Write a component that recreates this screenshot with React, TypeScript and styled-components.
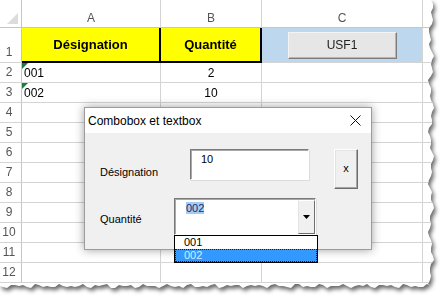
import React from "react";
import styled, { createGlobalStyle } from "styled-components";

const GlobalStyle = createGlobalStyle`
  html, body {
    margin: 0;
    padding: 0;
    background: #ffffff;
    overflow: hidden;
  }
`;

// jagged "torn paper" outline for the right and bottom edges
const tornOutline = (() => {
  const w = 431;
  const h = 286;
  const pts: string[] = ["0px 0px"];
  for (let y = 0; y <= h; y += 4) {
    const jitter = Math.round(Math.sin(y * 1.7) * 1.6 + Math.sin(y * 0.37) * 1.4);
    pts.push(`${w + jitter}px ${y}px`);
  }
  for (let x = w; x >= 0; x -= 4) {
    const jitter = Math.round(Math.sin(x * 2.1) * 1.3 + Math.sin(x * 0.29) * 1.2);
    pts.push(`${x}px ${h + jitter}px`);
  }
  pts.push("0px 286px");
  return `polygon(${pts.join(", ")})`;
})();

const Page = styled.div`
  position: relative;
  width: 443px;
  height: 297px;
  background: #ffffff;
  overflow: hidden;
`;

const Paper = styled.div`
  filter: drop-shadow(2px 3px 2px rgba(0, 0, 0, 0.6));
`;

const Sheet = styled.div`
  width: 436px;
  height: 290px;
  background: #ffffff;
  clip-path: ${tornOutline};
  display: grid;
  grid-template-columns: 22px 139px 101px 161px 1fr;
  grid-template-rows: 28px 35px repeat(11, 20px) 1fr;
  font-family: "Liberation Sans", Arial, sans-serif;
  font-size: 12px;
  color: #000;
`;

const Corner = styled.div`
  position: relative;
  border-right: 1px solid #c6c6c6;
  border-bottom: 1px solid #c6c6c6;

  &::after {
    content: "";
    position: absolute;
    right: 3px;
    bottom: 3px;
    width: 0;
    height: 0;
    border-left: 11px solid transparent;
    border-bottom: 11px solid #dcdcdc;
  }
`;

const ColHead = styled.div`
  display: flex;
  align-items: flex-end;
  justify-content: center;
  padding-bottom: 2px;
  box-sizing: border-box;
  border-right: 1px solid #d4d4d4;
  border-bottom: 1px solid #c6c6c6;
  color: #555;
  line-height: 14px;
`;

const RowHead = styled.div`
  display: flex;
  align-items: flex-end;
  justify-content: center;
  padding: 0 3px 3px 0;
  box-sizing: border-box;
  border-right: 1px solid #c6c6c6;
  border-bottom: 1px solid #d4d4d4;
  color: #555;
  line-height: 14px;
`;

const Cell = styled.div<{
  $fill?: string;
  $align?: "left" | "center";
  $bold?: boolean;
  $thick?: boolean;
  $flag?: boolean;
}>`
  position: relative;
  display: flex;
  align-items: center;
  justify-content: ${(p) => (p.$align === "center" ? "center" : "flex-start")};
  padding: 0 2px;
  box-sizing: border-box;
  background: ${(p) => p.$fill || "transparent"};
  border-right: ${(p) => (p.$thick ? "2px solid #000" : "1px solid #d4d4d4")};
  border-bottom: ${(p) => (p.$thick ? "2px solid #000" : "1px solid #d4d4d4")};
  font-weight: ${(p) => (p.$bold ? 700 : 400)};
  font-size: ${(p) => (p.$bold ? "13px" : "12px")};
  line-height: 14px;

  &::before {
    content: "";
    display: ${(p) => (p.$flag ? "block" : "none")};
    position: absolute;
    left: 0;
    top: 0;
    border-top: 6px solid #1f7a3f;
    border-right: 6px solid transparent;
  }
`;

const SheetButton = styled.div`
  width: 109px;
  height: 27px;
  box-sizing: border-box;
  margin: 0 auto;
  display: flex;
  align-items: center;
  justify-content: center;
  background: #e6e6e6;
  border: 1px solid;
  border-color: #f4f4f4 #7d7d7d #7d7d7d #f4f4f4;
  box-shadow: inset -1px -1px 0 #b4b4b4;
  font-size: 12px;
  color: #222;
`;

// ---- UserForm ----

const Dialog = styled.div`
  position: absolute;
  left: 84px;
  top: 107px;
  width: 288px;
  height: 143px;
  box-sizing: border-box;
  border: 1px solid #9c9c9c;
  background: #f0f0f0;
  box-shadow: 0 0 9px rgba(0, 0, 0, 0.38);
  font-family: "Liberation Sans", Arial, sans-serif;
  display: flex;
  flex-direction: column;
`;

const TitleBar = styled.div`
  height: 25px;
  flex: none;
  background: #ffffff;
  display: flex;
  align-items: center;
  justify-content: space-between;
  padding: 0 10px 0 3px;
`;

const Title = styled.span`
  font-size: 12px;
  color: #000;
`;

const FormBody = styled.div`
  padding: 16px 0 0 15px;
  display: flex;
  flex-direction: column;
  gap: 9px;
`;

const FormRow = styled.div`
  display: flex;
  align-items: flex-start;
`;

const Label = styled.span<{ $width: number; $offset: number }>`
  width: ${(p) => p.$width}px;
  margin-top: ${(p) => p.$offset}px;
  font-size: 11px;
  line-height: 13px;
  color: #000;
`;

const TextBox = styled.div`
  width: 119px;
  height: 31px;
  box-sizing: border-box;
  background: #fff;
  border: 1px solid;
  border-color: #7a7a7a #ffffff #ffffff #7a7a7a;
  box-shadow: inset 1px 1px 0 #a8a8a8, 1px 1px 0 #dcdcdc;
  padding: 3px 0 0 10px;
  font-size: 11px;
  line-height: 13px;
`;

const SmallButton = styled.div`
  width: 24px;
  height: 40px;
  margin-left: 25px;
  box-sizing: border-box;
  background: #f0f0f0;
  border: 1px solid;
  border-color: #ffffff #6e6e6e #6e6e6e #ffffff;
  box-shadow: inset -1px -1px 0 #a6a6a6, inset 1px 1px 0 #e3e3e3;
  display: flex;
  align-items: center;
  justify-content: center;
  font-size: 11px;
  padding-bottom: 2px;
`;

const Combo = styled.div`
  position: relative;
  width: 142px;
  height: 37px;
  box-sizing: border-box;
  background: #fff;
  border: 1px solid;
  border-color: #7a7a7a #ffffff #ffffff #7a7a7a;
  box-shadow: inset 1px 1px 0 #a8a8a8, 1px 1px 0 #dcdcdc;
  display: flex;
`;

const ComboText = styled.div`
  flex: 1;
  padding: 3px 0 0 11px;
  font-size: 11px;
  line-height: 13px;
`;

const Selected = styled.span`
  background: #a6cbef;
  color: #1b2a78;
`;

const ArrowButton = styled.div`
  width: 17px;
  margin: 1px 0 0 0;
  box-sizing: border-box;
  background: #f0f0f0;
  border: 1px solid;
  border-color: #ffffff #6e6e6e #6e6e6e #e3e3e3;
  display: flex;
  align-items: center;
  justify-content: center;
`;

const DropList = styled.div`
  position: absolute;
  left: -1px;
  top: calc(100% + 1px);
  width: 144px;
  box-sizing: border-box;
  background: #fff;
  border: 1px solid #000;
  font-size: 11px;
  line-height: 12px;
  z-index: 2;
`;

const DropItem = styled.div<{ $active?: boolean }>`
  height: 13px;
  box-sizing: border-box;
  padding-left: 9px;
  background: ${(p) => (p.$active ? "#3399ff" : "transparent")};
  color: ${(p) => (p.$active ? "#d6ecff" : "#000")};
  outline: ${(p) => (p.$active ? "1px dotted #1b1b1b" : "none")};
  outline-offset: -1px;
`;

// the fourth column is only a sliver at the torn edge, its letter is not visible
const columns = ["A", "B", "C", ""];

const rows: { a: string; b: string }[] = [
  { a: "001", b: "2" },
  { a: "002", b: "10" },
];

const CloseIcon = () => (
  <svg width="11" height="11" viewBox="0 0 11 11">
    <path d="M0.5 0.5 L10.5 10.5 M10.5 0.5 L0.5 10.5" stroke="#111" strokeWidth="1" fill="none" />
  </svg>
);

const ArrowIcon = () => (
  <svg width="7" height="4" viewBox="0 0 7 4">
    <path d="M0 0 H7 L3.5 4 Z" fill="#000" />
  </svg>
);

export default function App() {
  const emptyRows = Array.from({ length: 9 }, (_, i) => i + 4);

  return (
    <Page>
      <GlobalStyle />
      <Paper>
        <Sheet>
          <Corner />
          {columns.map((c, i) => (
            <ColHead key={i}>{c}</ColHead>
          ))}

          <RowHead>1</RowHead>
          <Cell $fill="#ffff00" $align="center" $bold $thick>
            Désignation
          </Cell>
          <Cell $fill="#ffff00" $align="center" $bold $thick>
            Quantité
          </Cell>
          <Cell $fill="#bdd7ee">
            <SheetButton>USF1</SheetButton>
          </Cell>
          <Cell />

          {rows.map((r, i) => (
            <React.Fragment key={r.a}>
              <RowHead>{i + 2}</RowHead>
              <Cell $flag>{r.a}</Cell>
              <Cell $align="center">{r.b}</Cell>
              <Cell />
              <Cell />
            </React.Fragment>
          ))}

          {emptyRows.map((n) => (
            <React.Fragment key={n}>
              <RowHead>{n}</RowHead>
              <Cell />
              <Cell />
              <Cell />
              <Cell />
            </React.Fragment>
          ))}
        </Sheet>
      </Paper>

      <Dialog>
        <TitleBar>
          <Title>Combobox et textbox</Title>
          <CloseIcon />
        </TitleBar>
        <FormBody>
          <FormRow>
            <Label $width={90} $offset={17}>
              Désignation
            </Label>
            <TextBox>10</TextBox>
            <SmallButton>x</SmallButton>
          </FormRow>
          <FormRow>
            <Label $width={74} $offset={15}>
              Quantité
            </Label>
            <Combo>
              <ComboText>
                <Selected>002</Selected>
              </ComboText>
              <ArrowButton>
                <ArrowIcon />
              </ArrowButton>
              <DropList>
                <DropItem>001</DropItem>
                <DropItem $active>002</DropItem>
              </DropList>
            </Combo>
          </FormRow>
        </FormBody>
      </Dialog>
    </Page>
  );
}
